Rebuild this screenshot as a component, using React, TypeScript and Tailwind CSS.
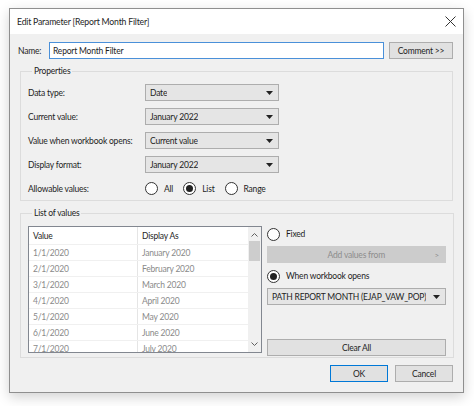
import { ReactNode } from 'react'

const rows = [
  ['1/1/2020', 'January 2020'],
  ['2/1/2020', 'February 2020'],
  ['3/1/2020', 'March 2020'],
  ['4/1/2020', 'April 2020'],
  ['5/1/2020', 'May 2020'],
  ['6/1/2020', 'June 2020'],
  ['7/1/2020', 'July 2020'],
]

function Caret() {
  return (
    <svg width="7" height="4" viewBox="0 0 7 4" className="shrink-0">
      <path d="M0 0h7L3.5 4z" fill="#222" />
    </svg>
  )
}

function Combo({ value, className = '' }: { value: string; className?: string }) {
  return (
    <div
      className={`h-[17px] border border-[#adadad] bg-[#e5e5e5] flex items-center justify-between pl-[4px] pr-[5px] text-[#222] ${className}`}
    >
      <span className="truncate">{value}</span>
      <Caret />
    </div>
  )
}

function Radio({ checked, label }: { checked?: boolean; label: string }) {
  return (
    <div className="flex items-center gap-[6px]">
      <span className="w-[13px] h-[13px] rounded-full border border-[#333] bg-white flex items-center justify-center">
        {checked && <span className="w-[7px] h-[7px] rounded-full bg-[#222]" />}
      </span>
      <span>{label}</span>
    </div>
  )
}

function Group({ title, className = '', children }: { title: string; className?: string; children: ReactNode }) {
  return (
    <fieldset className={`border border-[#dcdcdc] ${className}`}>
      <legend className="ml-[4px] px-[2px] text-[#222]">{title}</legend>
      {children}
    </fieldset>
  )
}

function PropRow({ label, value }: { label: string; value: string }) {
  return (
    <div className="flex items-center h-[17px]">
      <span className="w-[117px] shrink-0 whitespace-nowrap">{label}</span>
      <Combo value={value} className="w-[134px]" />
    </div>
  )
}

export default function App() {
  return (
    <div
      className="w-[474px] h-[406px] bg-white pl-[9px] pt-[8px] text-[8.5px] tracking-[-0.2px] leading-[12px] text-[#1e1e1e]"
      style={{ fontFamily: 'Lato, "Liberation Sans", sans-serif' }}
    >
      <div className="w-[455px] h-[385px] border border-[#8f8f8f] bg-[#f0f0f0] flex flex-col shadow-[0_4px_12px_rgba(0,0,0,0.18)]">
        {/* title bar */}
        <div className="h-[25px] bg-white flex items-center justify-between pl-[7px] pr-[7px]">
          <span className="text-[8.7px]">Edit Parameter [Report Month Filter]</span>
          <svg width="11" height="11" viewBox="0 0 11 11">
            <path d="M0.5 0.5l10 10M10.5 0.5l-10 10" stroke="#333" strokeWidth="1" />
          </svg>
        </div>

        <div className="flex-1 flex flex-col pl-[8px] pr-[9px] pt-[8px]">
          {/* name */}
          <div className="flex items-center h-[17px]">
            <span className="w-[31px]">Name:</span>
            <div className="w-[335px] h-[17px] border border-[#4a90d9] bg-white flex items-center pl-[3px]">
              Report Month Filter
            </div>
            <button className="ml-[5px] w-[64px] h-[17px] border border-[#adadad] bg-[#e1e1e1] flex items-center justify-center">
              Comment &gt;&gt;
            </button>
          </div>

          <div className="pl-[2px] pr-[1px] mt-[6px]">
            <Group title="Properties" className="h-[136px] pl-[7px] pt-[7px] flex flex-col gap-[7px]">
              <PropRow label="Data type:" value="Date" />
              <PropRow label="Current value:" value="January 2022" />
              <PropRow label="Value when workbook opens:" value="Current value" />
              <PropRow label="Display format:" value="January 2022" />
              <div className="flex items-center h-[17px]">
                <span className="w-[117px] shrink-0">Allowable values:</span>
                <div className="flex items-center gap-[10px]">
                  <Radio label="All" />
                  <Radio checked label="List" />
                  <Radio label="Range" />
                </div>
              </div>
            </Group>

            <Group title="List of values" className="mt-[6px] h-[151px] pl-[7px] pr-[7px] pt-[7px] flex">
              {/* table */}
              <div className="w-[234px] h-[127px] border border-[#828790] bg-white flex overflow-hidden">
                <div className="flex-1 flex flex-col">
                  <div className="h-[17px] flex items-center shrink-0">
                    <span className="w-[109px] pl-[4px] border-r border-[#e5e5e5] h-full flex items-center">Value</span>
                    <span className="pl-[4px]">Display As</span>
                  </div>
                  {rows.map(([v, d]) => (
                    <div key={v} className="h-[16px] shrink-0 flex items-center border-t border-[#f0f0f0] text-[#8a8a8a]">
                      <span className="w-[109px] pl-[4px] border-r border-[#e5e5e5] h-full flex items-center">{v}</span>
                      <span className="pl-[4px]">{d}</span>
                    </div>
                  ))}
                </div>
                <div className="w-[13px] bg-[#f0f0f0] flex flex-col items-center">
                  <svg width="7" height="5" viewBox="0 0 7 5" className="mt-[5px]">
                    <path d="M0.5 4.5L3.5 1.5L6.5 4.5" stroke="#606060" fill="none" />
                  </svg>
                  <div className="mt-[4px] w-[11px] h-[20px] bg-[#cdcdcd]" />
                  <div className="flex-1" />
                  <svg width="7" height="5" viewBox="0 0 7 5" className="mb-[5px]">
                    <path d="M0.5 0.5L3.5 3.5L6.5 0.5" stroke="#606060" fill="none" />
                  </svg>
                </div>
              </div>

              {/* right side */}
              <div className="ml-[5px] w-[179px] flex flex-col">
                <div className="mt-[1px] h-[14px] flex items-center">
                  <Radio label="Fixed" />
                </div>
                <div className="mt-[5px] h-[17px] border border-[#cccccc] bg-[#cccccc] flex items-center justify-between text-[#8d8d8d]">
                  <span className="flex-1 text-center pl-[10px]">Add values from</span>
                  <span className="pr-[6px] text-[8px]">&gt;</span>
                </div>
                <div className="mt-[6px] h-[14px] flex items-center">
                  <Radio checked label="When workbook opens" />
                </div>
                <Combo value="PATH REPORT MONTH (EJAP_VAW_POP)" className="mt-[5px] w-[179px] pl-[2px]" />
                <div className="flex-1" />
                <button className="mb-[1px] h-[17px] border border-[#adadad] bg-[#e1e1e1] flex items-center justify-center">
                  Clear All
                </button>
              </div>
            </Group>
          </div>

          {/* footer */}
          <div className="mt-[7px] flex justify-end gap-[7px] pr-[1px]">
            <button className="w-[58px] h-[17px] border border-[#0078d7] bg-[#e1e1e1] flex items-center justify-center">
              OK
            </button>
            <button className="w-[58px] h-[17px] border border-[#adadad] bg-[#e1e1e1] flex items-center justify-center">
              Cancel
            </button>
          </div>
        </div>
      </div>
    </div>
  )
}
